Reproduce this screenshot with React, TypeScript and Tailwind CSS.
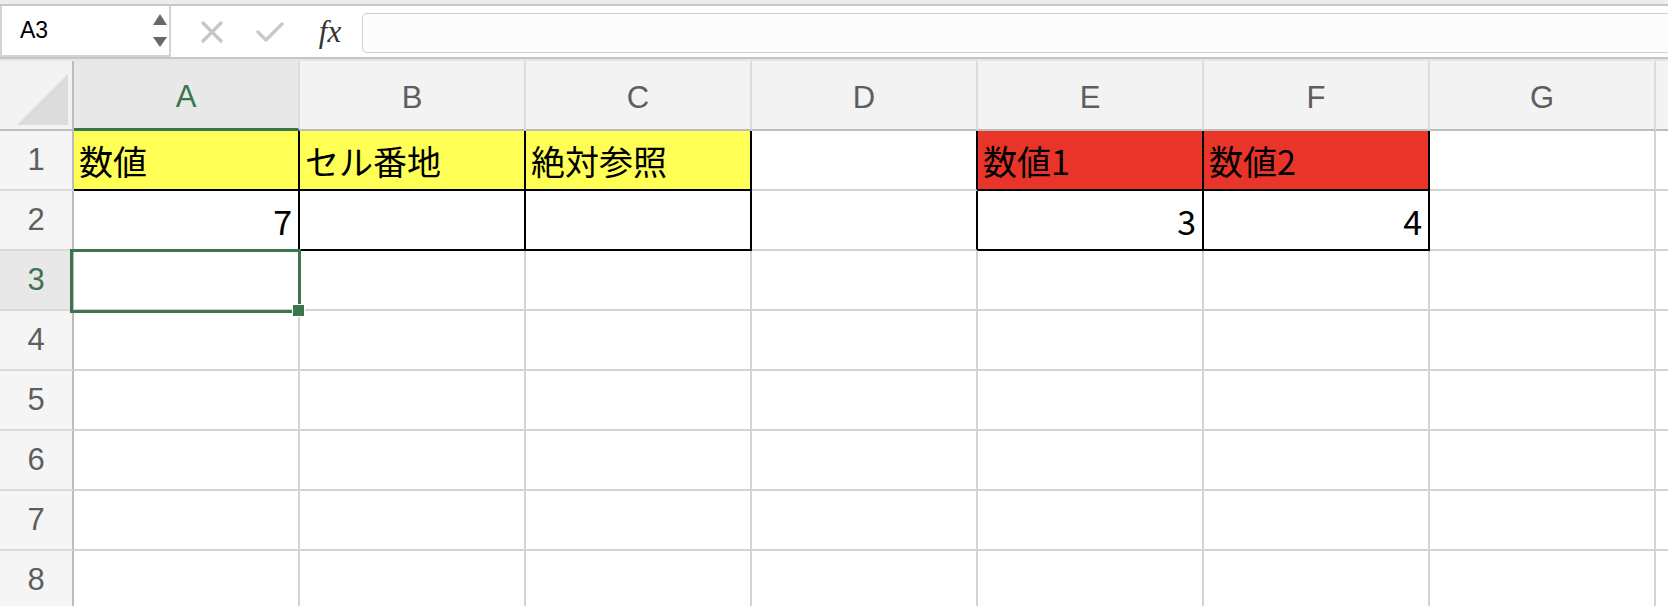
import clsx from 'clsx'

type Cell = {
  text?: string
  fill?: 'yellow' | 'red'
  num?: boolean
  r?: boolean // black right border
  b?: boolean // black bottom border
}

const COLS = ['A', 'B', 'C', 'D', 'E', 'F', 'G', 'H']

const DATA: Record<number, Cell[]> = {
  1: [
    { text: '数値', fill: 'yellow', r: true, b: true },
    { text: 'セル番地', fill: 'yellow', r: true, b: true },
    { text: '絶対参照', fill: 'yellow', r: true, b: true },
    { r: true },
    { text: '数値1', fill: 'red', r: true, b: true },
    { text: '数値2', fill: 'red', r: true, b: true },
  ],
  2: [
    { text: '7', num: true, r: true, b: true },
    { r: true, b: true },
    { r: true, b: true },
    { r: true },
    { text: '3', num: true, r: true, b: true },
    { text: '4', num: true, r: true, b: true },
  ],
}

function Toolbar() {
  return (
    <div className="flex flex-col">
      <div className="h-[4px] bg-[#ececec]" />
      <div className="h-[2px] bg-[#c8c8c8]" />
      <div className="flex h-[51px] bg-white">
        {/* Name box */}
        <div className="flex h-full w-[171px] shrink-0 items-center border-x-2 border-b-2 border-[#d3d3d3] bg-white pl-[18px] pr-[2px]">
          <span className="font-['Liberation_Sans',Arial,sans-serif] text-[23px] text-black">A3</span>
          <svg className="ml-auto" width="14" height="34" viewBox="0 0 14 34">
            <polygon points="7,0 14,11 0,11" fill="#686868" />
            <polygon points="0,23 14,23 7,33" fill="#686868" />
          </svg>
        </div>
        {/* cancel / enter / fx */}
        <svg className="ml-[30px] self-center" width="22" height="22" viewBox="0 0 22 22">
          <path d="M2 2 L20 20 M20 2 L2 20" stroke="#c6c6c6" strokeWidth="3.2" strokeLinecap="round" fill="none" />
        </svg>
        <svg className="ml-[33px] self-center" width="28" height="22" viewBox="0 0 28 22">
          <path d="M2 11 L10 19 L26 3" stroke="#c9c9c9" strokeWidth="3.4" strokeLinecap="round" strokeLinejoin="round" fill="none" />
        </svg>
        <div className="ml-[30px] flex w-[32px] items-center justify-center font-['Liberation_Serif',serif] text-[31px] italic leading-none text-[#333333]">
          fx
        </div>
        {/* formula input */}
        <div className="ml-[16px] mt-[7px] h-[40px] flex-1 rounded-l-[5px] border border-r-0 border-[#cfcfcf] bg-[#fcfcfc]" />
      </div>
      <div className="h-[2px] bg-[#c6c6c6]" />
      <div className="h-[2px] bg-[#e6e6e6]" />
    </div>
  )
}

function HeaderRow() {
  return (
    <div className="flex h-[70px]">
      <div className="flex h-full w-[74px] shrink-0 items-end justify-end border-b-2 border-r-2 border-b-[#bdbdbd] border-r-[#bdbdbd] bg-[#f3f3f3] pb-[4px] pr-[4px]">
        <svg width="51" height="51" viewBox="0 0 51 51">
          <polygon points="51,0 51,51 0,51" fill="#dcdcdc" />
        </svg>
      </div>
      {COLS.map((c) => (
        <div
          key={c}
          className={clsx(
            'flex h-full w-[226px] shrink-0 items-center justify-center border-r-2 border-r-[#dcdcdc] pt-[6px] font-["Liberation_Sans",Arial,sans-serif] text-[31px]',
            c === 'A'
              ? 'border-b-[3px] border-b-[#3b744d] bg-[#e8e8e8] text-[#3b744d]'
              : 'border-b-2 border-b-[#bdbdbd] bg-[#f3f3f3] text-[#5e5e5e]'
          )}
        >
          {c === 'H' ? '' : c}
        </div>
      ))}
    </div>
  )
}

function DataCell({ cell }: { cell: Cell }) {
  return (
    <div
      className={clsx(
        'flex h-[60px] w-[226px] shrink-0 items-center border-b-2 border-r-2 pl-[5px] pr-[6px] font-["Noto_Sans_CJK_JP",sans-serif] text-[34px] text-black',
        cell.fill === 'yellow' && 'bg-[#ffff55]',
        cell.fill === 'red' && 'bg-[#e9342a]',
        !cell.fill && 'bg-white',
        cell.num ? 'justify-end' : 'justify-start',
        cell.r ? 'border-r-black' : 'border-r-[#d4d4d4]',
        cell.b ? 'border-b-black' : 'border-b-[#d4d4d4]'
      )}
    >
      {cell.text}
    </div>
  )
}

function GridRow({ n }: { n: number }) {
  const cells = DATA[n] ?? []
  const selected = n === 3
  return (
    <div className="flex h-[60px]">
      <div
        className={clsx(
          'flex h-full w-[74px] shrink-0 items-center justify-center border-b-2 border-r-2 border-b-[#d9d9d9] border-r-[#bdbdbd] font-["Liberation_Sans",Arial,sans-serif] text-[31px]',
          selected ? 'bg-[#e8e8e8] text-[#3b744d]' : 'bg-[#f5f5f5] text-[#5e5e5e]'
        )}
      >
        {n}
      </div>
      {COLS.map((c, i) => (
        <DataCell key={c} cell={cells[i] ?? {}} />
      ))}
    </div>
  )
}

export default function App() {
  return (
    <div className="h-[606px] w-[1668px] overflow-hidden bg-white">
      <Toolbar />
      <HeaderRow />
      <div className="relative">
        {[1, 2, 3, 4, 5, 6, 7, 8].map((n) => (
          <GridRow key={n} n={n} />
        ))}
        {/* active cell A3 */}
        <div className="absolute left-[70px] top-[118px] h-[64px] w-[231px] border-[3px] border-[#3b744d]" />
        <div className="absolute left-[292px] top-[173px] h-[13px] w-[13px] border border-white bg-[#3b744d]" />
      </div>
    </div>
  )
}
